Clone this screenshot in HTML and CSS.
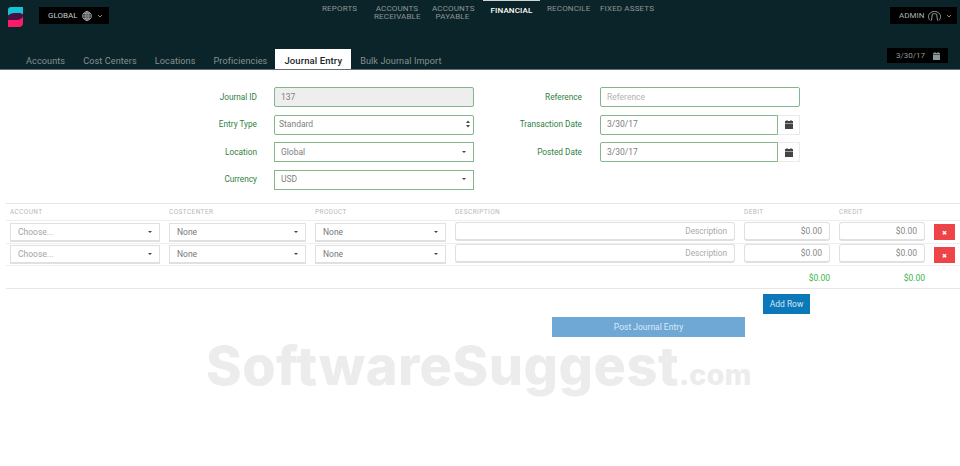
FILE: index.html
```html
<!DOCTYPE html>
<html lang="en">
<head>
<meta charset="utf-8">
<title>Journal Entry</title>
<link rel="stylesheet" href="styles.css">
</head>
<body>
<header class="header">
  <div class="top">
    <svg class="logo" width="15" height="20" viewBox="0 0 15 20">
      <path d="M3 0H15V8C15 7 13 6 9 6C5 6 1 7 0 9V3C0 1 1 0 3 0Z" fill="#17c3d6"/>
      <path d="M0 9C1 7 5 6 9 6C13 6 15 7 15 8.500C15 11 12 13 8 13H0Z" fill="#4a0f45"/>
      <path d="M0 13H8C12 13 15 11 15 8.500V16C15 18.500 13.500 20 11 20H0Z" fill="#fb1c68"/>
    </svg>
    <div class="pill global">
      <span>GLOBAL</span>
      <svg width="10" height="10" viewBox="0 0 10 10" fill="none" stroke="#c9cfcf" stroke-width=".7"><circle cx="5" cy="5" r="4.400"/><ellipse cx="5" cy="5" rx="2" ry="4.400"/><path d="M5 .6V9.400M.6 5H9.400M1.300 2.800H8.700M1.300 7.200H8.700"/></svg>
      <svg class="chev" width="6" height="4" viewBox="0 0 6 4" fill="none" stroke="#a8b0b0" stroke-width=".8"><path d="M1 1L3 3L5 1"/></svg>
    </div>
    <nav class="nav">
      <a class="nav-reports">REPORTS</a>
      <a class="nav-ar">ACCOUNTS<br>RECEIVABLE</a>
      <a class="nav-ap">ACCOUNTS<br>PAYABLE</a>
      <a class="nav-fin">FINANCIAL</a>
      <a class="nav-rec">RECONCILE</a>
      <a class="nav-fa">FIXED ASSETS</a>
    </nav>
    <div class="pill admin">
      <span>ADMIN</span>
      <svg width="13" height="10" viewBox="0 0 13 10" fill="none" stroke="#b5bcbc" stroke-width=".8"><path d="M2.200 9.500C1 8.300.5 7 .5 5.600C.5 2.700 3 .5 6.500 .5S12.500 2.700 12.500 5.600C12.500 7 12 8.300 10.800 9.500"/><path d="M3.500 9.500L4.300 3.200M9.500 9.500L8.700 3.200M4.300 3.200C5.500 2.500 7.500 2.500 8.700 3.200"/></svg>
      <svg class="chev" width="6" height="4" viewBox="0 0 6 4" fill="none" stroke="#a8b0b0" stroke-width=".8"><path d="M1 1L3 3L5 1"/></svg>
    </div>
  </div>
  <div class="bottom">
    <div class="tabs">
      <a class="tab">Accounts</a>
      <a class="tab">Cost Centers</a>
      <a class="tab">Locations</a>
      <a class="tab">Proficiencies</a>
      <a class="tab active">Journal Entry</a>
      <a class="tab">Bulk Journal Import</a>
    </div>
    <div class="date-pill">
      <span>3/30/17</span>
      <svg width="7" height="8" viewBox="0 0 7 8"><path d="M0 1H1.500V0H2.500V1H4.500V0H5.500V1H7V2.500H0ZM0 3H7V8H0Z" fill="#8f9696"/></svg>
    </div>
  </div>
</header>

<main class="main">
  <section class="form">
    <div class="col">
      <div class="field"><label>Journal ID</label><div class="ctl disabled">137</div></div>
      <div class="field"><label>Entry Type</label><div class="ctl native"><span>Standard</span>
        <svg width="4" height="8" viewBox="0 0 4 8" fill="#444"><path d="M0 3L2 .5L4 3ZM0 5L2 7.500L4 5Z"/></svg></div></div>
      <div class="field"><label>Location</label><div class="ctl square"><span>Global</span><i class="caret"></i></div></div>
      <div class="field"><label>Currency</label><div class="ctl square"><span>USD</span><i class="caret"></i></div></div>
    </div>
    <div class="col">
      <div class="field"><label>Reference</label><div class="ctl ph">Reference</div></div>
      <div class="field"><label>Transaction Date</label><div class="group"><div class="ctl">3/30/17</div><div class="addon"><svg width="8" height="9" viewBox="0 0 8 9"><path d="M0 1H1.500V0H2.500V1H5.500V0H6.500V1H8V3H0ZM0 3.500H8V9H0Z" fill="#444"/></svg></div></div></div>
      <div class="field"><label>Posted Date</label><div class="group"><div class="ctl">3/30/17</div><div class="addon"><svg width="8" height="9" viewBox="0 0 8 9"><path d="M0 1H1.500V0H2.500V1H5.500V0H6.500V1H8V3H0ZM0 3.500H8V9H0Z" fill="#444"/></svg></div></div></div>
    </div>
  </section>

  <section class="table">
    <div class="row head">
      <div>ACCOUNT</div><div>COSTCENTER</div><div>PRODUCT</div><div>DESCRIPTION</div><div>DEBIT</div><div>CREDIT</div><div></div>
    </div>
    <div class="row line">
      <div class="cell sel muted"><span>Choose...</span><i class="caret"></i></div>
      <div class="cell sel"><span>None</span><i class="caret"></i></div>
      <div class="cell sel"><span>None</span><i class="caret"></i></div>
      <div class="cell inp desc">Description</div>
      <div class="cell inp">$0.00</div>
      <div class="cell inp">$0.00</div>
      <div class="del">&#10006;</div>
    </div>
    <div class="row line">
      <div class="cell sel muted"><span>Choose...</span><i class="caret"></i></div>
      <div class="cell sel"><span>None</span><i class="caret"></i></div>
      <div class="cell sel"><span>None</span><i class="caret"></i></div>
      <div class="cell inp desc">Description</div>
      <div class="cell inp">$0.00</div>
      <div class="cell inp">$0.00</div>
      <div class="del">&#10006;</div>
    </div>
    <div class="row totals">
      <div></div><div></div><div></div><div></div><div>$0.00</div><div>$0.00</div><div></div>
    </div>
  </section>

  <div class="actions"><button class="add">Add Row</button></div>
  <div class="post-wrap"><button class="post">Post Journal Entry</button></div>
</main>
<div class="watermark">SoftwareSuggest<small>.com</small></div>
</body>
</html>
```
FILE: styles.css
```css
* { box-sizing: border-box; }
html, body { margin: 0; padding: 0; }
body {
  width: 960px;
  height: 466px;
  overflow: hidden;
  position: relative;
  background: #fff;
  font-family: "Roboto", "Liberation Sans", sans-serif;
  font-size: 8.500px;
  color: #555;
}
.header {
  height: 70px;
  background: #0b2429;
  border-bottom: 1px solid #5d7073;
  display: flex;
  flex-direction: column;
  justify-content: space-between;
}
.top { display: flex; align-items: flex-start; height: 40px; position: relative; }
.logo { margin: 7px 0 0 8px; flex: none; }
.pill {
  background: #000;
  height: 17px;
  margin-top: 7px;
  display: flex;
  align-items: center;
  color: #c3c9c9;
  font-size: 8px;
}
.global { width: 70px; margin-left: 16px; padding-left: 9px; gap: 4px; }
.admin { width: 67px; margin-left: 238px; padding-left: 9px; gap: 4px; color: #a9b0b0; }
.chev { margin-left: 1px; }
.nav { display: flex; margin-left: 213px; align-items: flex-start; color: #8b9596; font-size: 8px; letter-spacing: .15px; line-height: 8px; text-align: center; width: 330px; }
.nav a { display: block; padding-top: 5px; flex: none; }
.nav-reports { width: 35px; }
.nav-ar { width: 46px; margin-left: 17px; }
.nav-ap { width: 41px; margin-left: 12px; }
.nav-fin { width: 57px; margin-left: 10px; border-top: 1px solid #cfd4d4; color: #fff; font-weight: 500; height: 20px; padding-top: 6px !important; }
.nav-rec { width: 43px; margin-left: 7px; }
.nav-fa { width: 52px; margin-left: 10px; white-space: nowrap; }

.bottom { display: flex; justify-content: space-between; align-items: flex-start; height: 20px; }
.tabs { display: flex; margin-left: 17px; }
.tab { display: block; padding: 7px 9px 0; height: 20px; color: #86908f; font-size: 9.100px; letter-spacing: .1px; white-space: nowrap; }
.tab.active { background: #fff; color: #17262a; font-weight: 500; font-size: 9.500px; margin-left: -1px; padding-top: 6px; }
.date-pill {
  width: 61px;
  height: 15px;
  margin: -1px 12px 0 0;
  background: #000;
  color: #8f9696;
  font-size: 8px;
  display: flex;
  align-items: center;
  gap: 8px;
  padding-left: 9px;
}

.form { display: flex; padding-top: 17px; height: 133px; }
.col { display: flex; flex-direction: column; gap: 7.670px; }
.col:first-child { width: 474px; }
.col:last-child { width: 326px; }
.field { display: flex; justify-content: flex-end; align-items: center; height: 20px; }
.field label { color: #2f7f3f; font-size: 8.250px; margin: 0 17px 1px 0; white-space: nowrap; }
.col:last-child .field label { margin-right: 18px; }
.ctl {
  width: 200px;
  height: 20px;
  border: 1px solid #85b58a;
  border-radius: 2px;
  background: #fff;
  display: flex;
  align-items: center;
  justify-content: space-between;
  padding: 0 6px 1px;
  font-size: 8.500px;
  color: #808080;
  flex: none;
}
.disabled { background: #eee; }
.native { padding-left: 4px; padding-right: 3px; }
.square { border-radius: 0; padding-right: 7px; }
.ph { color: #b3b3b3; }
.group { display: flex; width: 200px; }
.group .ctl { width: 178px; border-radius: 2px 0 0 2px; }
.addon { width: 22px; height: 20px; border: 1px solid #eaeaea; border-left: 0; display: flex; align-items: center; justify-content: center; }
.caret { width: 0; height: 0; border: 2.500px solid transparent; border-top-color: #444; border-bottom: 0; flex: none; }

.table { margin-left: 6px; }
.row {
  display: grid;
  grid-template-columns: 150px 137px 131px 280px 86px 86px 21px;
  column-gap: 9px;
  padding-left: 4px;
}
.head { height: 18px; border-top: 1px solid #e6e6e6; border-bottom: 1px solid #eee; align-items: center; color: #b9b9b9; font-size: 6.500px; letter-spacing: .4px; }
.line { height: 23px; border-bottom: 1px solid #eee; padding-top: 2px; }
.line + .line { height: 22px; padding-top: 1px; }
.line + .line .del { margin-top: 2px; }
.cell { height: 19px; display: flex; align-items: center; border: 1px solid #e0e0e0; border-bottom-width: 2px; background: #fff; font-size: 8.500px; color: #777; }
.sel { justify-content: space-between; padding: 0 7px; }
.sel span { white-space: nowrap; }
.muted { color: #a5a5a5; }
.inp { justify-content: flex-end; border-radius: 3px; padding-right: 7px; color: #888; margin-top: -1px; }
.desc { color: #aaa; font-size: 8.250px; }
.del { width: 21px; height: 16px; margin-top: 1px; background: #ee4347; color: #fff; font-size: 6px; display: flex; align-items: center; justify-content: center; }
.totals { height: 23px; border-bottom: 1px solid #e6e6e6; align-items: center; color: #39b54a; font-size: 8.500px; text-align: right; padding-top: 1px; }

.actions { display: flex; justify-content: flex-end; padding: 5px 150px 0 0; }
.add { width: 47px; height: 20px; border: 0; padding: 0; background: #0b78ba; color: #d5e7f2; font: inherit; font-size: 8.500px; }
.post-wrap { margin: 3px 0 0 552px; }
.post { width: 193px; height: 20px; border: 0; padding: 0; background: #6fa8d4; color: #dbe9f4; font: inherit; font-size: 8.500px; display: block; }

.watermark {
  position: absolute;
  left: 206px;
  top: 331px;
  color: #ececec;
  font-family: "Inter", "Liberation Sans", sans-serif;
  font-weight: 800;
  font-size: 54px;
  letter-spacing: .5px;
  line-height: 70px;
  white-space: nowrap;
}
.watermark small { font-size: 29px; letter-spacing: 0; }
```
